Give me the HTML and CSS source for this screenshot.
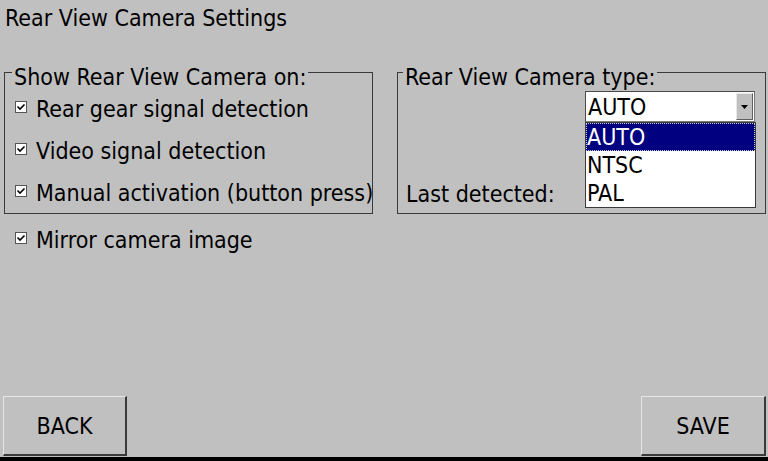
FILE: index.html
```html
<!DOCTYPE html>
<html>
<head>
<meta charset="utf-8">
<title>Rear View Camera Settings</title>
<link rel="stylesheet" href="styles.css">
</head>
<body>
<div class="screen">
  <div class="title">Rear View Camera Settings</div>
  <div class="groups">
    <fieldset class="group group-show">
      <legend>Show Rear View Camera on:</legend>
      <div class="check">
        <span class="box"><svg width="10" height="10" viewBox="0 0 10 10"><polyline points="1.5,4.5 4,7 8.5,2.5" fill="none" stroke="#000" stroke-width="1.6"/></svg></span>
        <span class="label">Rear gear signal detection</span>
      </div>
      <div class="check">
        <span class="box"><svg width="10" height="10" viewBox="0 0 10 10"><polyline points="1.5,4.5 4,7 8.5,2.5" fill="none" stroke="#000" stroke-width="1.6"/></svg></span>
        <span class="label">Video signal detection</span>
      </div>
      <div class="check">
        <span class="box"><svg width="10" height="10" viewBox="0 0 10 10"><polyline points="1.5,4.5 4,7 8.5,2.5" fill="none" stroke="#000" stroke-width="1.6"/></svg></span>
        <span class="label">Manual activation (button press)</span>
      </div>
    </fieldset>
    <fieldset class="group group-type">
      <legend>Rear View Camera type:</legend>
      <div class="combo-row">
        <div class="combo">
          <span class="combo-value">AUTO</span>
          <span class="combo-btn"><svg width="7" height="4" viewBox="0 0 7 4"><polygon points="0,0 7,0 3.5,4" fill="#000"/></svg></span>
          <ul class="list">
            <li class="item selected">AUTO</li>
            <li class="item">NTSC</li>
            <li class="item">PAL</li>
          </ul>
        </div>
      </div>
      <div class="last">Last detected:</div>
    </fieldset>
  </div>
  <div class="check mirror">
    <span class="box"><svg width="10" height="10" viewBox="0 0 10 10"><polyline points="1.5,4.5 4,7 8.5,2.5" fill="none" stroke="#000" stroke-width="1.6"/></svg></span>
    <span class="label">Mirror camera image</span>
  </div>
  <div class="spacer"></div>
  <div class="buttons">
    <button class="btn btn-back">BACK</button>
    <button class="btn btn-save">SAVE</button>
  </div>
  <div class="bottom-bar"></div>
</div>
</body>
</html>
```
FILE: styles.css
```css
html, body {
  margin: 0;
  padding: 0;
  background: #c0c0c0;
}
.screen {
  width: 768px;
  height: 461px;
  display: flex;
  flex-direction: column;
  background: #c0c0c0;
  font-family: "DejaVu Sans Condensed", "DejaVu Sans", sans-serif;
  font-size: 23px;
  color: #000;
  overflow: hidden;
}
.title {
  padding: 5px 0 0 5px;
  line-height: 26px;
  height: 26px;
}
.groups {
  display: flex;
  gap: 24px;
  padding-left: 4px;
  margin-top: 24px;
}
.group {
  margin: 0;
  width: 369px;
  box-sizing: border-box;
  border: 1px solid #3a3a3a;
  padding: 6px 2px 7px 10px;
  min-width: 0;
}
.group legend {
  padding: 9px 2px 0 2px;
  margin-left: -3px;
  line-height: 26px;
  white-space: nowrap;
}
.check {
  display: flex;
  align-items: center;
  line-height: 26px;
  height: 26px;
  white-space: nowrap;
}
.group-show .check + .check {
  margin-top: 16px;
}
.box {
  width: 10px;
  height: 10px;
  border: 1px solid #555;
  background: #fff;
  margin-right: 9px;
  margin-bottom: 4px;
  display: flex;
  flex: none;
}
.box svg {
  display: block;
}
.group-type {
  padding: 1px 10px 6px 8px;
}
.combo-row {
  display: flex;
  justify-content: flex-end;
}
.combo {
  position: relative;
  width: 170px;
  height: 31px;
  box-sizing: border-box;
  border: 1px solid #4a4a4a;
  border-right-color: #7a7a7a;
  border-bottom-color: #7a7a7a;
  background: #fff;
  display: flex;
  align-items: center;
}
.combo-value {
  flex: 1;
  padding-left: 2px;
  line-height: 26px;
}
.combo-btn {
  width: 17px;
  height: 27px;
  margin-right: 1px;
  box-sizing: border-box;
  background: #c0c0c0;
  border-top: 1px solid #e8e8e8;
  border-left: 1px solid #e8e8e8;
  border-right: 1px solid #606060;
  border-bottom: 1px solid #606060;
  display: flex;
  align-items: center;
  justify-content: center;
}
.list {
  position: absolute;
  left: -1px;
  top: 30px;
  width: 171px;
  height: 86px;
  box-sizing: border-box;
  margin: 0;
  padding: 0;
  list-style: none;
  background: #fff;
  border: 1px solid #3a3a3a;
  z-index: 2;
}
.item {
  height: 28px;
  line-height: 28px;
  padding-left: 1px;
  box-sizing: border-box;
}
.item.selected {
  background: #000080;
  color: #fff;
  outline: 1px dotted #c8c8c8;
  outline-offset: -1px;
}
.last {
  margin-top: 59px;
  line-height: 26px;
  height: 26px;
  white-space: nowrap;
}
.mirror {
  margin-top: 13px;
  padding-left: 15px;
}
.spacer {
  flex: 1;
}
.buttons {
  display: flex;
  justify-content: space-between;
  padding: 0 2px 0 3px;
  margin-bottom: 1px;
}
.btn {
  height: 60px;
  box-sizing: border-box;
  background: #c0c0c0;
  font-family: inherit;
  font-size: 23px;
  color: #000;
  border-top: 1px solid #e6e6e6;
  border-left: 1px solid #e6e6e6;
  border-right: 2px solid #3a3a3a;
  border-bottom: 2px solid #3a3a3a;
  padding: 0;
  margin: 0;
}
.btn-back {
  width: 124px;
}
.btn-save {
  width: 125px;
}
.bottom-bar {
  height: 4px;
  background: #000;
}
```
